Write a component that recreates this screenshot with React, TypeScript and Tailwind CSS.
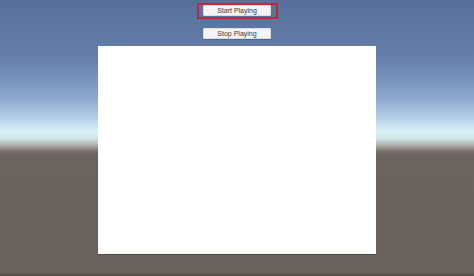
import React from "react";

export default function App() {
  return (
    <div
      className="w-full h-[276px] flex flex-col items-center bg-[linear-gradient(180deg,#56709a_0%,#6580ab_22%,#8ea9cf_36%,#b6d0e8_43%,#d8f0f6_47.5%,#d2e6e8_50%,#b0b4b0_52.5%,#7e7671_54.5%,#6b635e_56%,#6a625d_100%)] relative"
      style={{ fontFamily: '"Liberation Sans", Arial, sans-serif' }}
    >
      <div className="mt-[3px] w-[81px] h-[16px] border-2 border-[#c8243a] flex justify-center">
        <button className="w-[68px] h-[11px] bg-[#f4f4f4] border border-[#dcdcdc] rounded-[1px] text-[7px] leading-[9px] text-[#3a3a3a]">
          Start Playing
        </button>
      </div>
      <button className="mt-[9px] w-[68px] h-[11px] bg-[#f4f4f4] border border-[#dcdcdc] rounded-[1px] text-[7px] leading-[9px] text-[#3a3a3a] shadow-[0_1px_0_rgba(0,0,0,0.15)]">
        Stop Playing
      </button>
      <div className="mt-[7px] w-[278px] h-[208px] bg-white shadow-[0_1px_0_rgba(0,0,0,0.25)]" />
      <div className="absolute bottom-0 left-0 w-full h-[2px] bg-[#55504c]" />
    </div>
  );
}
